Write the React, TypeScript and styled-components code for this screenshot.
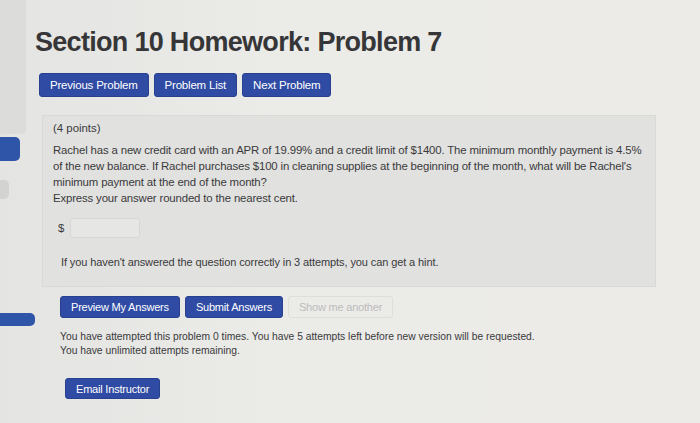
import React, { FC } from 'react';
import styled, { createGlobalStyle } from 'styled-components';

const GlobalStyle = createGlobalStyle`
	html, body {
		margin: 0;
		padding: 0;
		background: #e9e9e6;
	}
	body {
		font-family: 'Liberation Sans', Arial, sans-serif;
		color: #3d3d3f;
	}
`;

const Page = styled.div`
	width: 700px;
	height: 423px;
	overflow: hidden;
	display: flex;
	background: linear-gradient(90deg, #e4e4e2 0%, #ebebe8 40%, #ecebe8 100%);
`;
const Sidebar = styled.div`
	width: 26px;
	flex-shrink: 0;
	display: flex;
	flex-direction: column;
`;
const SideBlock = styled.div`
	height: 134px;
	background: #dcdcda;
	border-radius: 0 0 4px 0;
`;
const SideTab = styled.div<{ $blue?: boolean; $w: number; $h: number; $mt: number }>`
	width: ${(p) => p.$w}px;
	height: ${(p) => p.$h}px;
	margin-top: ${(p) => p.$mt}px;
	background: ${(p) => (p.$blue ? '#2f55a8' : '#d3d3d1')};
	border-radius: 0 5px 5px 0;
`;
const Main = styled.div`
	flex: 1;
	padding: 24px 0 0 9px;
	display: flex;
	flex-direction: column;
	align-items: flex-start;
`;
const Title = styled.h1`
	margin: 0;
	font-size: 27px;
	line-height: 36px;
	font-weight: bold;
	letter-spacing: -0.7px;
	color: #363638;
`;
const ButtonRow = styled.div<{ $mt: number; $ml: number }>`
	display: flex;
	gap: 5px;
	margin-top: ${(p) => p.$mt}px;
	margin-left: ${(p) => p.$ml}px;
`;
const Button = styled.button<{ $h?: number; $fs?: number }>`
	font-family: 'Liberation Sans', Arial, sans-serif;
	font-size: ${(p) => p.$fs ?? 11}px;
	letter-spacing: -0.2px;
	color: #fff;
	background: #2f4ba3;
	border: 1px solid #27408f;
	border-radius: 3px;
	height: ${(p) => p.$h ?? 24}px;
	padding: 0 10px;
	cursor: pointer;
	&:disabled {
		background: transparent;
		color: #bcbcbc;
		border-color: #dededb;
		cursor: default;
	}
`;
const ProblemBox = styled.div`
	margin-top: 18px;
	margin-left: 7px;
	width: 614px;
	box-sizing: border-box;
	background: #e1e1df;
	border: 1px solid #d9d9d6;
	padding: 4px 10px 16px 10px;
	font-size: 11.4px;
	line-height: 16px;
	color: #3a3a3c;
`;
const Points = styled.div`
	margin-bottom: 6px;
`;
const Statement = styled.p`
	margin: 0;
	letter-spacing: -0.15px;
`;
const AnswerRow = styled.div`
	display: flex;
	align-items: center;
	gap: 6px;
	margin: 12px 0 0 5px;
`;
const AnswerInput = styled.input`
	width: 70px;
	height: 20px;
	box-sizing: border-box;
	border: 1px solid #d6d6d3;
	border-radius: 3px;
	background: #e6e6e4;
`;
const Hint = styled.p`
	margin: 16px 0 0 8px;
	font-size: 11px;
	letter-spacing: -0.1px;
`;
const Attempts = styled.div`
	margin: 12px 0 0 25px;
	font-size: 10.3px;
	line-height: 14px;
	color: #3a3a3c;
`;

const App: FC = () => {
	return (
		<>
			<GlobalStyle />
			<Page>
				<Sidebar>
					<SideBlock />
					<SideTab $blue $w={20} $h={24} $mt={3} />
					<SideTab $w={9} $h={19} $mt={19} />
					<SideTab $blue $w={35} $h={13} $mt={114} />
				</Sidebar>
				<Main>
					<Title>Section 10 Homework: Problem 7</Title>
					<ButtonRow $mt={13} $ml={4}>
						<Button $fs={11.5}>Previous Problem</Button>
						<Button $fs={11.5}>Problem List</Button>
						<Button $fs={11.5}>Next Problem</Button>
					</ButtonRow>
					<ProblemBox>
						<Points>(4 points)</Points>
						<Statement>
							Rachel has a new credit card with an APR of 19.99% and a credit limit
							of $1400. The minimum monthly payment is 4.5% of the new balance. If
							Rachel purchases $100 in cleaning supplies at the beginning of the
							month, what will be Rachel's minimum payment at the end of the month?
							<br />
							Express your answer rounded to the nearest cent.
						</Statement>
						<AnswerRow>
							<span>$</span>
							<AnswerInput type="text" />
						</AnswerRow>
						<Hint>
							If you haven't answered the question correctly in 3 attempts, you can
							get a hint.
						</Hint>
					</ProblemBox>
					<ButtonRow $mt={9} $ml={25}>
						<Button $h={22}>Preview My Answers</Button>
						<Button $h={22}>Submit Answers</Button>
						<Button $h={22} disabled>
							Show me another
						</Button>
					</ButtonRow>
					<Attempts>
						You have attempted this problem 0 times. You have 5 attempts left before
						new version will be requested.
						<br />
						You have unlimited attempts remaining.
					</Attempts>
					<ButtonRow $mt={20} $ml={30}>
						<Button $h={21}>Email Instructor</Button>
					</ButtonRow>
				</Main>
			</Page>
		</>
	);
};

export default App;
